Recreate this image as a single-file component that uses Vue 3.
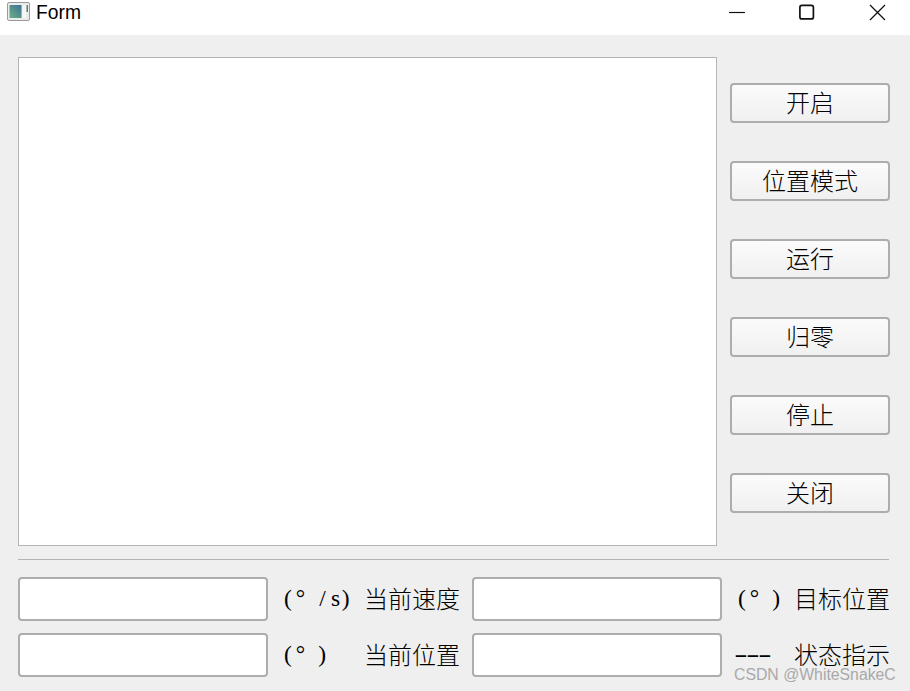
<script setup>
const buttons = ['开启', '位置模式', '运行', '归零', '停止', '关闭']
const rows = [
  [
    { unit: '(°\u00a0/s)', name: '当前速度' },
    { unit: '(°\u00a0)', name: '目标位置' },
  ],
  [
    { unit: '(°\u00a0)', name: '当前位置' },
    { unit: '---', name: '状态指示' },
  ],
]
</script>

<template>
  <div class="window">
    <header class="titlebar">
      <svg class="app-icon" width="24" height="22" viewBox="0 0 24 22">
        <defs>
          <linearGradient id="pane" x1="0" y1="1" x2="1" y2="0">
            <stop offset="0" stop-color="#6fae86" />
            <stop offset="0.55" stop-color="#4f8f8c" />
            <stop offset="1" stop-color="#3a6f9a" />
          </linearGradient>
        </defs>
        <rect x="1.5" y="2.5" width="22" height="18" rx="1.5" fill="#ebebeb" stroke="#9a9a9a" />
        <rect x="3.5" y="5" width="12" height="13" fill="url(#pane)" />
        <rect x="16.5" y="5" width="3.5" height="13" fill="#f6f6f6" />
        <rect x="20.5" y="5" width="1.5" height="7" fill="#5a7f7c" />
      </svg>
      <span class="title">Form</span>
      <div class="controls">
        <svg width="70" height="24" viewBox="0 0 70 24" class="ctl"><path d="M0 12.5H16" stroke="#111" stroke-width="1.2" fill="none" /></svg>
        <svg width="70" height="24" viewBox="0 0 70 24" class="ctl"><rect x="0.9" y="5.4" width="13.5" height="13.5" rx="2" stroke="#111" stroke-width="1.7" fill="none" /></svg>
        <svg width="18" height="24" viewBox="0 0 18 24" class="ctl"><path d="M1 5L16 20M16 5L1 20" stroke="#111" stroke-width="1.3" fill="none" /></svg>
      </div>
    </header>

    <main class="body">
      <section class="top">
        <div class="canvas"></div>
        <div class="buttons">
          <button v-for="b in buttons" :key="b" class="btn">{{ b }}</button>
        </div>
      </section>
      <hr class="sep" />
      <section class="fields">
        <div v-for="(row, i) in rows" :key="i" class="row">
          <div v-for="f in row" :key="f.name" class="field">
            <input class="input" type="text" />
            <span class="unit"><span v-for="(c, k) in f.unit" :key="k" class="ch" :class="{ dash: c === '-', close: c === ')' }">{{ c }}</span></span>
            <span class="name">{{ f.name }}</span>
          </div>
        </div>
      </section>
      <span class="watermark">CSDN @WhiteSnakeC</span>
    </main>
  </div>
</template>

<style>
html, body { margin: 0; background: #efefef; }
</style>

<style scoped>
.window {
  width: 910px;
  height: 691px;
  display: flex;
  flex-direction: column;
  overflow: hidden;
  font-family: "Noto Sans CJK SC", "Liberation Serif", serif;
  font-weight: 300;
  color: #000;
}
.titlebar {
  height: 35px;
  flex: none;
  background: #fff;
  display: flex;
  align-items: flex-start;
  padding-left: 6px;
  box-sizing: border-box;
}
.title {
  margin-left: 6px;
  font-family: "Liberation Sans", sans-serif;
  font-weight: 400;
  font-size: 19.3px;
  line-height: 25px;
  color: #000;
}
.controls {
  margin-left: auto;
  display: flex;
  padding-right: 23px;
}
.ctl { display: block; flex: none; }
.body {
  position: relative;
  flex: 1;
  background: #efefef;
  padding: 22px 20px 0 18px;
  box-sizing: border-box;
}
.top {
  display: flex;
  gap: 13px;
}
.canvas {
  width: 699px;
  height: 489px;
  background: #fff;
  border: 1px solid #b4b4b4;
  box-sizing: border-box;
}
.buttons {
  width: 160px;
  padding-top: 26px;
  display: flex;
  flex-direction: column;
  gap: 38px;
}
.btn {
  height: 40px;
  width: 160px;
  box-sizing: border-box;
  border: 2px solid #adadad;
  border-radius: 4px;
  background: linear-gradient(#fbfbfb, #f0f0f0);
  font: inherit;
  font-size: 24px;
  line-height: 1;
  padding: 0 0 2px;
  color: #000;
}
.sep {
  margin: 13px 0 0;
  width: 871px;
  height: 1px;
  border: 0;
  background: #b4b4b4;
}
.fields {
  margin-top: 17px;
  display: flex;
  flex-direction: column;
  gap: 12px;
}
.row {
  display: flex;
}
.field {
  display: flex;
  align-items: center;
  height: 44px;
  width: 454px;
}
.row .field:last-child { width: 418px; }
.input {
  width: 250px;
  height: 44px;
  flex: none;
  box-sizing: border-box;
  border: 2px solid #adadad;
  border-radius: 4px;
  background: #fff;
  padding: 0;
  outline: none;
}
.unit {
  margin-left: 15px;
  padding-bottom: 2px;
  width: 81px;
  flex: none;
  display: flex;
  font-size: 23.5px;
  white-space: nowrap;
  font-family: "Liberation Serif", "Noto Sans CJK SC", serif;
  font-weight: 400;
}
.ch {
  display: block;
  width: 11.75px;
  flex: none;
  padding-left: 1px;
  box-sizing: border-box;
}
.close { padding-left: 0; }
.dash {
  padding-left: 0;
  text-align: center;
  transform: translateX(-2px) scaleX(1.7);
}
.name {
  font-size: 24px;
  padding-bottom: 4px;
  white-space: nowrap;
}
.row .field:last-child .unit { width: 57px; }
.watermark {
  position: absolute;
  left: 734px;
  top: 630px;
  font-family: "Liberation Sans", sans-serif;
  font-weight: 400;
  font-size: 15.8px;
  line-height: 20px;
  color: #a9a9a9;
  white-space: nowrap;
}
</style>
